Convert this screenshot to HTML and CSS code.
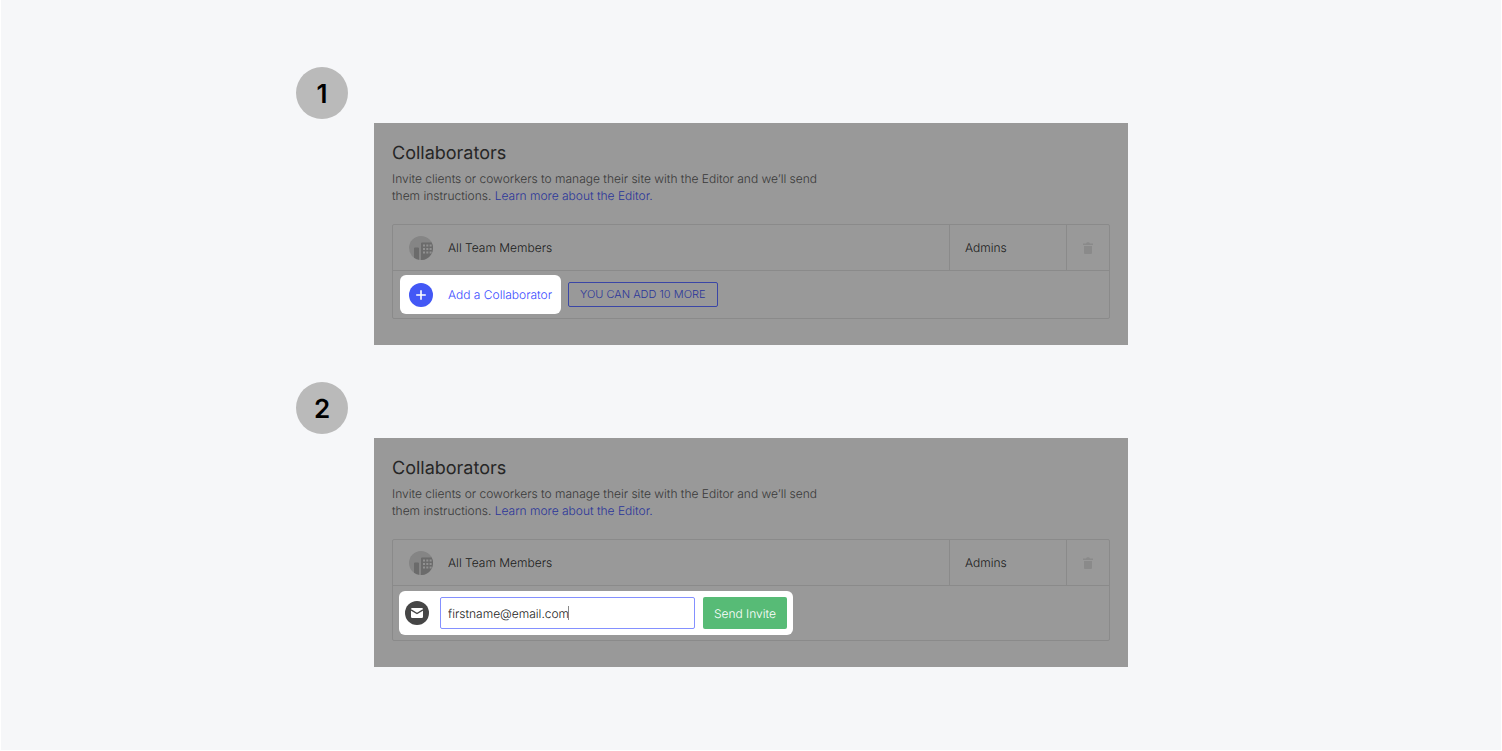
FILE: index.html
```
<!DOCTYPE html>
<html lang="en">
<head>
<meta charset="utf-8">
<title>Collaborators</title>
<link rel="stylesheet" href="styles.css">
</head>
<body>

<svg class="sprite" aria-hidden="true">
    <symbol id="team" viewBox="0 0 24 24">
        <circle cx="12" cy="12" r="12" fill="#858585"/>
        <path fill="#6b6b6b" d="M5 12.500a1 1 0 0 1 1-1h3a1 1 0 0 1 1 1V23.800A12 12 0 0 1 5 21.800zM12 7.500a1 1 0 0 1 1-1h9.700A12 12 0 0 1 12 24z"/>
        <path fill="#919191" d="M14 8.500h2v2h-2zM17.300 8.500h2v2h-2zM20.600 8.500h2v2h-2zM14 12h2v2h-2zM17.300 12h2v2h-2zM20.600 12h2v2h-2zM14 15.500h2v2h-2zM17.300 15.500h2v2h-2zM20.600 15.500h2v2h-2z"/>
    </symbol>
    <symbol id="trash" viewBox="0 0 12 12">
        <path fill="#8a8a8a" d="M1 1.500h3L5 .3h2l1 1.200h3v1.500H1zM2 4h8v7a1 1 0 0 1-1 1H3a1 1 0 0 1-1-1z"/>
    </symbol>
</svg>

<main class="steps">
    <section class="step">
        <div class="number">1</div>
        <div class="panel">
            <h2>Collaborators</h2>
            <p>Invite clients or coworkers to manage their site with the Editor and we’ll send them instructions. <a href="#">Learn more about the Editor.</a></p>
            <table>
                <tr class="member">
                    <td class="name"><div class="cell"><svg class="avatar"><use href="#team"/></svg>All Team Members</div></td>
                    <td class="role">Admins</td>
                    <td class="remove"><button class="trash" aria-label="Remove"><svg><use href="#trash"/></svg></button></td>
                </tr>
                <tr class="add">
                    <td colspan="3">
                        <div class="cell">
                            <button class="highlight add-button">
                                <svg class="avatar" viewBox="0 0 24 24"><circle cx="12" cy="12" r="12" fill="#4358f5"/><path d="M12 7.200v9.600M7.200 12h9.600" stroke="#fff" stroke-width="1.600"/></svg>
                                Add a Collaborator
                            </button>
                            <span class="quota">YOU CAN ADD 10 MORE</span>
                        </div>
                    </td>
                </tr>
            </table>
        </div>
    </section>

    <section class="step">
        <div class="number">2</div>
        <div class="panel">
            <h2>Collaborators</h2>
            <p>Invite clients or coworkers to manage their site with the Editor and we’ll send them instructions. <a href="#">Learn more about the Editor.</a></p>
            <table>
                <tr class="member">
                    <td class="name"><div class="cell"><svg class="avatar"><use href="#team"/></svg>All Team Members</div></td>
                    <td class="role">Admins</td>
                    <td class="remove"><button class="trash" aria-label="Remove"><svg><use href="#trash"/></svg></button></td>
                </tr>
                <tr class="invite">
                    <td colspan="3">
                        <form class="highlight invite-form">
                            <label for="email" aria-label="Email">
                                <svg class="avatar" viewBox="0 0 24 24"><circle cx="12" cy="12" r="12" fill="#464646"/><rect x="6" y="7" width="12" height="10" rx="1.200" fill="#fff"/><path d="M6 8.800 12 12.500l6-3.700" fill="none" stroke="#464646" stroke-width="1.400"/></svg>
                            </label>
                            <div class="field">
                                <input type="text" id="email" name="email" value="firstname@email.com">
                                <span class="caret"></span>
                            </div>
                            <button type="button" class="send">Send Invite</button>
                        </form>
                    </td>
                </tr>
            </table>
        </div>
    </section>
</main>

</body>
</html>
```

FILE: styles.css
```
* {
    box-sizing: border-box;
}

html {
    background: #fff;
}

body {
    margin: 0;
    min-height: 100vh;
    border: 1px solid #fff;
    border-width: 0 1px 1px;
    background: #f6f7f9;
    font-family: Inter, sans-serif;
    font-size: 12px;
    font-weight: 300;
    color: #1a1a1a;
    text-rendering: geometricPrecision;
}

button, input {
    font: inherit;
    text-rendering: inherit;
}

.sprite {
    position: absolute;
    width: 0;
    height: 0;
}

.steps {
    display: flex;
    flex-direction: column;
    gap: 37px;
    max-width: 910px;
    margin: 0 auto;
    padding: 67px 0;
}

.step {
    display: grid;
    grid-template-columns: 78px 1fr 78px;
    row-gap: 4px;
}

.number {
    width: 52px;
    height: 52px;
    border-radius: 50%;
    background: #bababa;
    color: #000;
    font-size: 26px;
    font-weight: 600;
    line-height: 56px;
    text-align: center;
}

.panel {
    grid-row: 2;
    grid-column: 2;
    padding: 19px 18px 26px;
    background: #999;
}

h2 {
    margin: 0 0 5px;
    font-size: 18px;
    font-weight: 400;
    line-height: 23px;
    color: #262626;
}

p {
    max-width: 440px;
    margin: 0 0 20px;
    line-height: 17px;
    color: #383838;
}

a {
    color: #2a359a;
    text-decoration: none;
}

table {
    width: 100%;
    border: 1px solid #8a8a8a;
    border-radius: 2px;
    border-spacing: 0;
}

td {
    padding: 0;
}

.member td {
    height: 46px;
    border-bottom: 1px solid #8a8a8a;
}

.member td + td {
    border-left: 1px solid #8a8a8a;
}

.cell {
    display: flex;
    align-items: center;
}

.name .cell {
    gap: 15px;
    padding-left: 16px;
}

.avatar {
    flex: none;
    display: block;
    width: 24px;
    height: 24px;
}

.member .role {
    width: 117px;
    padding-left: 15px;
}

.remove {
    width: 43px;
}

.trash {
    display: block;
    margin: 0 auto;
    padding: 0;
    border: 0;
    background: none;
}

.trash svg {
    display: block;
    width: 12px;
    height: 12px;
}

.add td {
    height: 47px;
}

.add .cell {
    gap: 7px;
    padding-left: 7px;
}

.highlight {
    display: flex;
    align-items: center;
    border: 0;
    border-radius: 6px;
    background: #fff;
}

.add-button {
    gap: 15px;
    height: 39px;
    padding: 0 9px;
    color: #3a4bff;
}

.quota {
    padding: 0 11px;
    border: 1px solid #3a46a6;
    border-radius: 2px;
    color: #2a359a;
    font-size: 11px;
    line-height: 23px;
}

.invite td {
    height: 54px;
    padding-left: 6px;
}

.invite-form {
    width: 394px;
    max-width: 100%;
    height: 44px;
    padding: 0 6px;
}

.field {
    position: relative;
    flex: 1;
    margin: 0 8px 0 11px;
}

.field input {
    display: block;
    width: 100%;
    height: 32px;
    padding: 0 7px;
    border: 1px solid #8490ff;
    border-radius: 2px;
    outline: 0;
    background: #fff;
    color: #222;
}

.caret {
    position: absolute;
    top: 9px;
    left: 128px;
    width: 1px;
    height: 14px;
    background: #888;
}

.send {
    height: 32px;
    padding: 0 11px;
    border: 0;
    border-radius: 2px;
    background: #57bb76;
    color: #fff;
}
```
